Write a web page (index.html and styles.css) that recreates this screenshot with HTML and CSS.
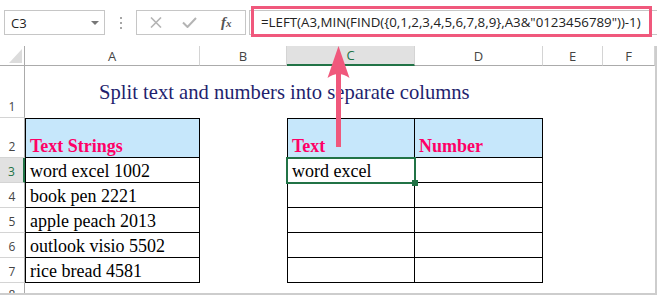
FILE: index.html
```html
<!DOCTYPE html>
<html lang="en">
<head>
    <meta charset="UTF-8">
    <title>Split text and numbers</title>
    <link rel="stylesheet" href="styles.css">
</head>
<body>
    <div class="app">
        <div class="formula-bar">
            <div class="name-box">
                <span>C3</span>
                <svg width="8" height="4" viewBox="0 0 8 4"><path d="M0 0H8L4 4Z" fill="#777"/></svg>
            </div>
            <div class="grip"><i></i><i></i><i></i></div>
            <div class="fx-buttons">
                <svg class="btn-x" width="12" height="11" viewBox="0 0 12 11"><path d="M1 0.5L11 10.5M11 0.5L1 10.5" stroke="#b4b4b4" stroke-width="1.6"/></svg>
                <svg class="btn-ok" width="15" height="11" viewBox="0 0 15 11"><path d="M1 5.5L5.5 10L14 1" stroke="#b4b4b4" stroke-width="2" fill="none"/></svg>
                <span class="fx">f<small>x</small></span>
            </div>
            <div class="formula">=LEFT(A3,MIN(FIND({0,1,2,3,4,5,6,7,8,9},A3&amp;"0123456789"))-1)</div>
            <div class="highlight"></div>
        </div>

        <div class="sheet">
            <!-- header row -->
            <div class="corner"><svg width="25" height="20" viewBox="0 0 25 20"><path d="M22 3V17H9Z" fill="#dcdcdc"/></svg></div>
            <div class="ch">A</div>
            <div class="ch">B</div>
            <div class="ch on">C</div>
            <div class="ch">D</div>
            <div class="ch">E</div>
            <div class="ch">F</div>

            <!-- row 1 -->
            <div class="rh">1</div>
            <div class="title">Split text and numbers into separate columns</div>

            <!-- row 2 -->
            <div class="rh">2</div>
            <div class="c t top left hd">Text Strings</div>
            <div class="c"></div>
            <div class="c t top left hd">Text</div>
            <div class="c t top hd">Number</div>
            <div class="c"></div>
            <div class="c"></div>

            <!-- row 3 -->
            <div class="rh on">3</div>
            <div class="c t left">word excel 1002</div>
            <div class="c"></div>
            <div class="c t left sel">word excel</div>
            <div class="c t"></div>
            <div class="c"></div>
            <div class="c"></div>

            <!-- row 4 -->
            <div class="rh">4</div>
            <div class="c t left">book pen 2221</div>
            <div class="c"></div>
            <div class="c t left"></div>
            <div class="c t"></div>
            <div class="c"></div>
            <div class="c"></div>

            <!-- row 5 -->
            <div class="rh">5</div>
            <div class="c t left">apple peach 2013</div>
            <div class="c"></div>
            <div class="c t left"></div>
            <div class="c t"></div>
            <div class="c"></div>
            <div class="c"></div>

            <!-- row 6 -->
            <div class="rh">6</div>
            <div class="c t left">outlook visio 5502</div>
            <div class="c"></div>
            <div class="c t left"></div>
            <div class="c t"></div>
            <div class="c"></div>
            <div class="c"></div>

            <!-- row 7 -->
            <div class="rh">7</div>
            <div class="c t left">rice bread 4581</div>
            <div class="c"></div>
            <div class="c t left"></div>
            <div class="c t"></div>
            <div class="c"></div>
            <div class="c"></div>

            <!-- row 8 (cut off by the window) -->
            <div class="rh last">8</div>
            <div class="c"></div>
            <div class="c"></div>
            <div class="c"></div>
            <div class="c"></div>
            <div class="c"></div>
            <div class="c"></div>
        </div>

        <!-- annotation arrow -->
        <svg class="arrow" width="657" height="296" viewBox="0 0 657 296">
            <path d="M336 68H341V147H336Z" fill="#f0587c"/>
            <path d="M338.5 46L349.5 78Q338.5 70 327.5 78Z" fill="#f0587c"/>
        </svg>
    </div>
</body>
</html>
```

FILE: styles.css
```css
:root {
    --grid-line: #d4d4d4;
    --head-line: #ababab;
    --excel-green: #217346;
    --pink: #f0587c;
}

* {
    box-sizing: border-box;
}

body {
    margin: 0;
    width: 657px;
    height: 296px;
    overflow: hidden;
    background: #fff;
    font-family: "Open Sans", "Liberation Sans", sans-serif;
}

.app {
    position: relative;
    width: 657px;
    height: 296px;
}

/* formula bar */
.formula-bar {
    display: flex;
    align-items: flex-start;
    height: 46px;
    padding: 10px 0 0 4px;
}

.name-box {
    width: 101px;
    height: 25px;
    border: 1px solid #c6c6c6;
    display: flex;
    align-items: center;
    justify-content: space-between;
    padding: 0 5px 0 6px;
    font-size: 13px;
    color: #222;
}

.grip {
    display: flex;
    flex-direction: column;
    gap: 3px;
    margin: 7px 14px 0 15px;
}

.grip i {
    display: block;
    width: 2px;
    height: 2px;
    background: #a6a6a6;
}

.fx-buttons {
    width: 110px;
    height: 25px;
    border: 1px solid #c6c6c6;
    display: flex;
    align-items: center;
}

.btn-x {
    margin-left: 13px;
}

.btn-ok {
    margin-left: 20px;
}

.fx {
    margin-left: 24px;
    font-family: "Liberation Serif", serif;
    font-style: italic;
    font-weight: bold;
    font-size: 15px;
    color: #555;
}

.fx small {
    font-size: 11px;
}

.formula {
    flex: 1;
    margin-left: 3px;
    height: 25px;
    border: 1px solid #c6c6c6;
    border-right: none;
    padding-left: 11px;
    font-size: 13.3px;
    line-height: 23px;
    color: #222;
    white-space: nowrap;
}

.highlight {
    position: absolute;
    left: 251px;
    top: 6px;
    width: 401px;
    height: 31px;
    border: 3px solid var(--pink);
}

/* sheet */
.sheet {
    display: grid;
    grid-template-columns: 25px 175px 87px 128px 128px 60px 52px;
    grid-template-rows: 20px 52px 40px repeat(5, 25px) 10px;
    width: 657px;
    height: 249px;
    border-right: 2px solid #cdcdcd;
    border-bottom: 2px solid #cdcdcd;
    overflow: hidden;
}

.corner {
    border-right: 1px solid var(--head-line);
    border-bottom: 1px solid var(--head-line);
}

.corner svg {
    display: block;
}

.ch {
    display: flex;
    align-items: center;
    justify-content: center;
    font-size: 13px;
    color: #444;
    border-right: 1px solid var(--grid-line);
    border-bottom: 1px solid var(--head-line);
}

.ch.on {
    background: #e1e1e1;
    color: var(--excel-green);
    border-bottom: 2px solid var(--excel-green);
}

.rh {
    display: flex;
    align-items: flex-end;
    justify-content: center;
    padding-bottom: 3px;
    font-size: 12px;
    line-height: 14px;
    color: #444;
    border-right: 1px solid var(--head-line);
    border-bottom: 1px solid var(--grid-line);
}

.rh.on {
    background: #e1e1e1;
    color: var(--excel-green);
    border-right: 2px solid var(--excel-green);
}

.rh.last {
    align-items: flex-start;
    padding: 5px 0 0;
    border-bottom: none;
}

.title {
    grid-column: span 6;
    padding: 15px 0 0 74px;
    font-family: "Liberation Serif", serif;
    font-size: 20.6px;
    line-height: 23px;
    color: #1f1f6e;
    white-space: nowrap;
}

.c {
    display: flex;
    align-items: flex-end;
    padding: 0 0 0 4px;
    font-family: "Liberation Serif", serif;
    font-size: 18px;
    line-height: 22px;
    color: #000;
    white-space: nowrap;
}

.t {
    border-right: 1px solid #000;
    border-bottom: 1px solid #000;
}

.t.top {
    border-top: 1px solid #000;
}

.t.left {
    border-left: 1px solid #000;
}

.hd {
    background: #c6e7fb;
    color: #ff0066;
    font-weight: bold;
}

.sel {
    position: relative;
    z-index: 2;
    outline: 2px solid var(--excel-green);
    outline-offset: -1px;
}

.sel::after {
    content: "";
    position: absolute;
    right: -4px;
    bottom: -4px;
    width: 6px;
    height: 6px;
    background: var(--excel-green);
}

.arrow {
    position: absolute;
    left: 0;
    top: 0;
    pointer-events: none;
    z-index: 5;
}
```
